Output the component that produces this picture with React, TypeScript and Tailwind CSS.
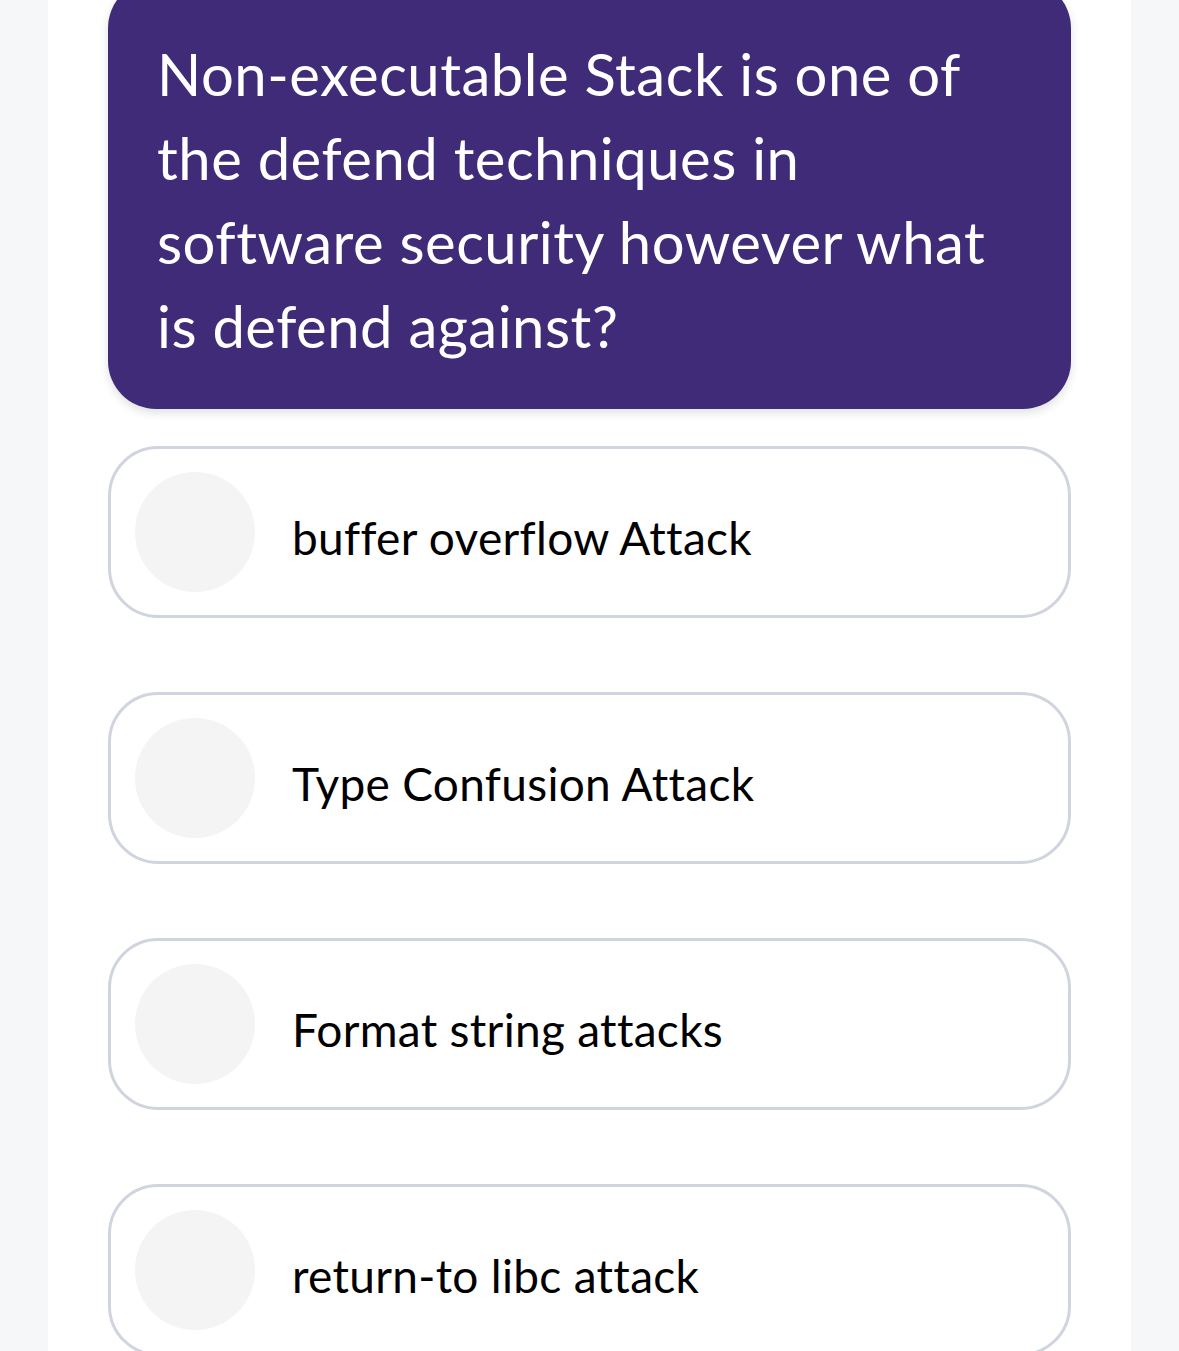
import React from 'react';

const options = [
  'buffer overflow Attack',
  'Type Confusion Attack',
  'Format string attacks',
  'return-to libc attack',
];

export default function App() {
  return (
    <div
      className="min-h-screen bg-[#f6f7f9] flex justify-center overflow-hidden"
      style={{ fontFamily: 'Lato, "Noto Sans", sans-serif' }}
    >
      <div className="w-[1083px] bg-white px-[60px] h-[1351px] overflow-hidden">
        <div className="-mt-[20px] bg-[#3f2b78] rounded-[48px] shadow-[0_4px_10px_rgba(0,0,0,0.12)] pl-[49px] pr-[40px] pt-[52px] pb-[41px]">
          <p className="text-white text-[58px] leading-[84px] tracking-[0.5px]">
            Non-executable Stack is one of the defend techniques in software security however what is defend against?
          </p>
        </div>

        <div className="mt-[37px] flex flex-col gap-[74px]">
          {options.map((opt) => (
            <button
              key={opt}
              className="h-[172px] w-full flex items-center border-[3px] border-[#d0d4de] rounded-[50px] bg-white pl-[24px] text-left"
            >
              <span className="w-[120px] h-[120px] rounded-full bg-[#f4f4f4] shrink-0" />
              <span className="ml-[37px] pt-[10px] text-black text-[46px] tracking-[0.3px]">{opt}</span>
            </button>
          ))}
        </div>
      </div>
    </div>
  );
}
